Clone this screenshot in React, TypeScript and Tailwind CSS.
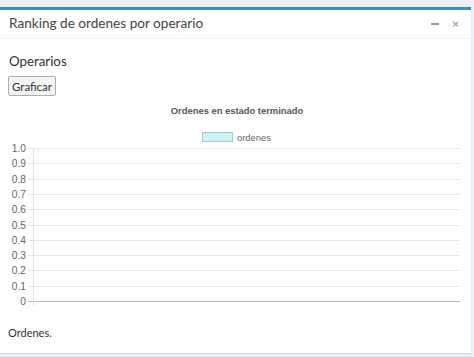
import React from "react";

const ticks = ["1.0", "0.9", "0.8", "0.7", "0.6", "0.5", "0.4", "0.3", "0.2", "0.1", "0"];

function Chart() {
  const top = 46;
  const step = 15.3;
  return (
    <svg width="470" height="206" viewBox="0 0 470 206" className="block">
      <text x="237" y="12" textAnchor="middle" fontFamily="'Liberation Sans', Arial, sans-serif" fontSize="9.4" fontWeight="bold" fill="#555">
        Ordenes en estado terminado
      </text>
      <rect x="202.5" y="30.5" width="30" height="9" fill="#d4f1f2" stroke="#8fd3d4" strokeWidth="1" />
      <text x="237" y="38.5" fontFamily="'Liberation Sans', Arial, sans-serif" fontSize="9.4" fill="#666">ordenes</text>
      {ticks.map((t, i) => {
        const y = top + i * step;
        const isZero = i === ticks.length - 1;
        return (
          <g key={t}>
            <line x1="28" x2="460" y1={Math.round(y) + 0.5} y2={Math.round(y) + 0.5} stroke={isZero ? "#bbb" : "#e6e6e6"} strokeWidth="1" />
            <text x="26" y={y + 4} textAnchor="end" fontFamily="'Liberation Sans', Arial, sans-serif" fontSize="10.2" fill="#666">{t}</text>
          </g>
        );
      })}
      <line x1="33.5" x2="33.5" y1={top} y2={top + 10 * step + 5} stroke="#e0e0e0" strokeWidth="1" />
    </svg>
  );
}

export default function App() {
  return (
    <div className="w-[474px] h-[357px] bg-[#ecf0f5] pt-[7px] overflow-hidden" style={{ fontFamily: "Lato, 'Open Sans', sans-serif" }}>
      <div className="w-[471px] h-[346px] bg-white border-t-[3px] border-[#3c8dbc] shadow-[0_1px_1px_rgba(0,0,0,0.1)] flex flex-col">
        <div className="h-[29px] flex items-center justify-between pl-[9px] pr-[12px] border-b border-[#f4f4f4]">
          <span className="text-[13.6px] text-[#444] leading-none">Ranking de ordenes por operario</span>
          <div className="flex items-center gap-[13px] text-[#97a0b3]">
            <span className="block w-[8px] h-[2px] bg-[#97a0b3]" />
            <span className="text-[12px] font-bold leading-none">×</span>
          </div>
        </div>
        <div className="px-[9px] pt-[16px]">
          <div className="text-[13.3px] text-[#333] leading-none">Operarios</div>
          <button className="mt-[8px] ml-[-1px] h-[20px] w-[48px] border border-[#adadad] bg-[#f4f4f4] rounded-[2px] text-[11.5px] text-[#333] leading-none">
            Graficar
          </button>
        </div>
        <div className="mt-[5px]">
          <Chart />
        </div>
        <div className="px-[8px] mt-[19px] text-[11px] text-[#333] leading-none">Ordenes.</div>
      </div>
    </div>
  );
}
